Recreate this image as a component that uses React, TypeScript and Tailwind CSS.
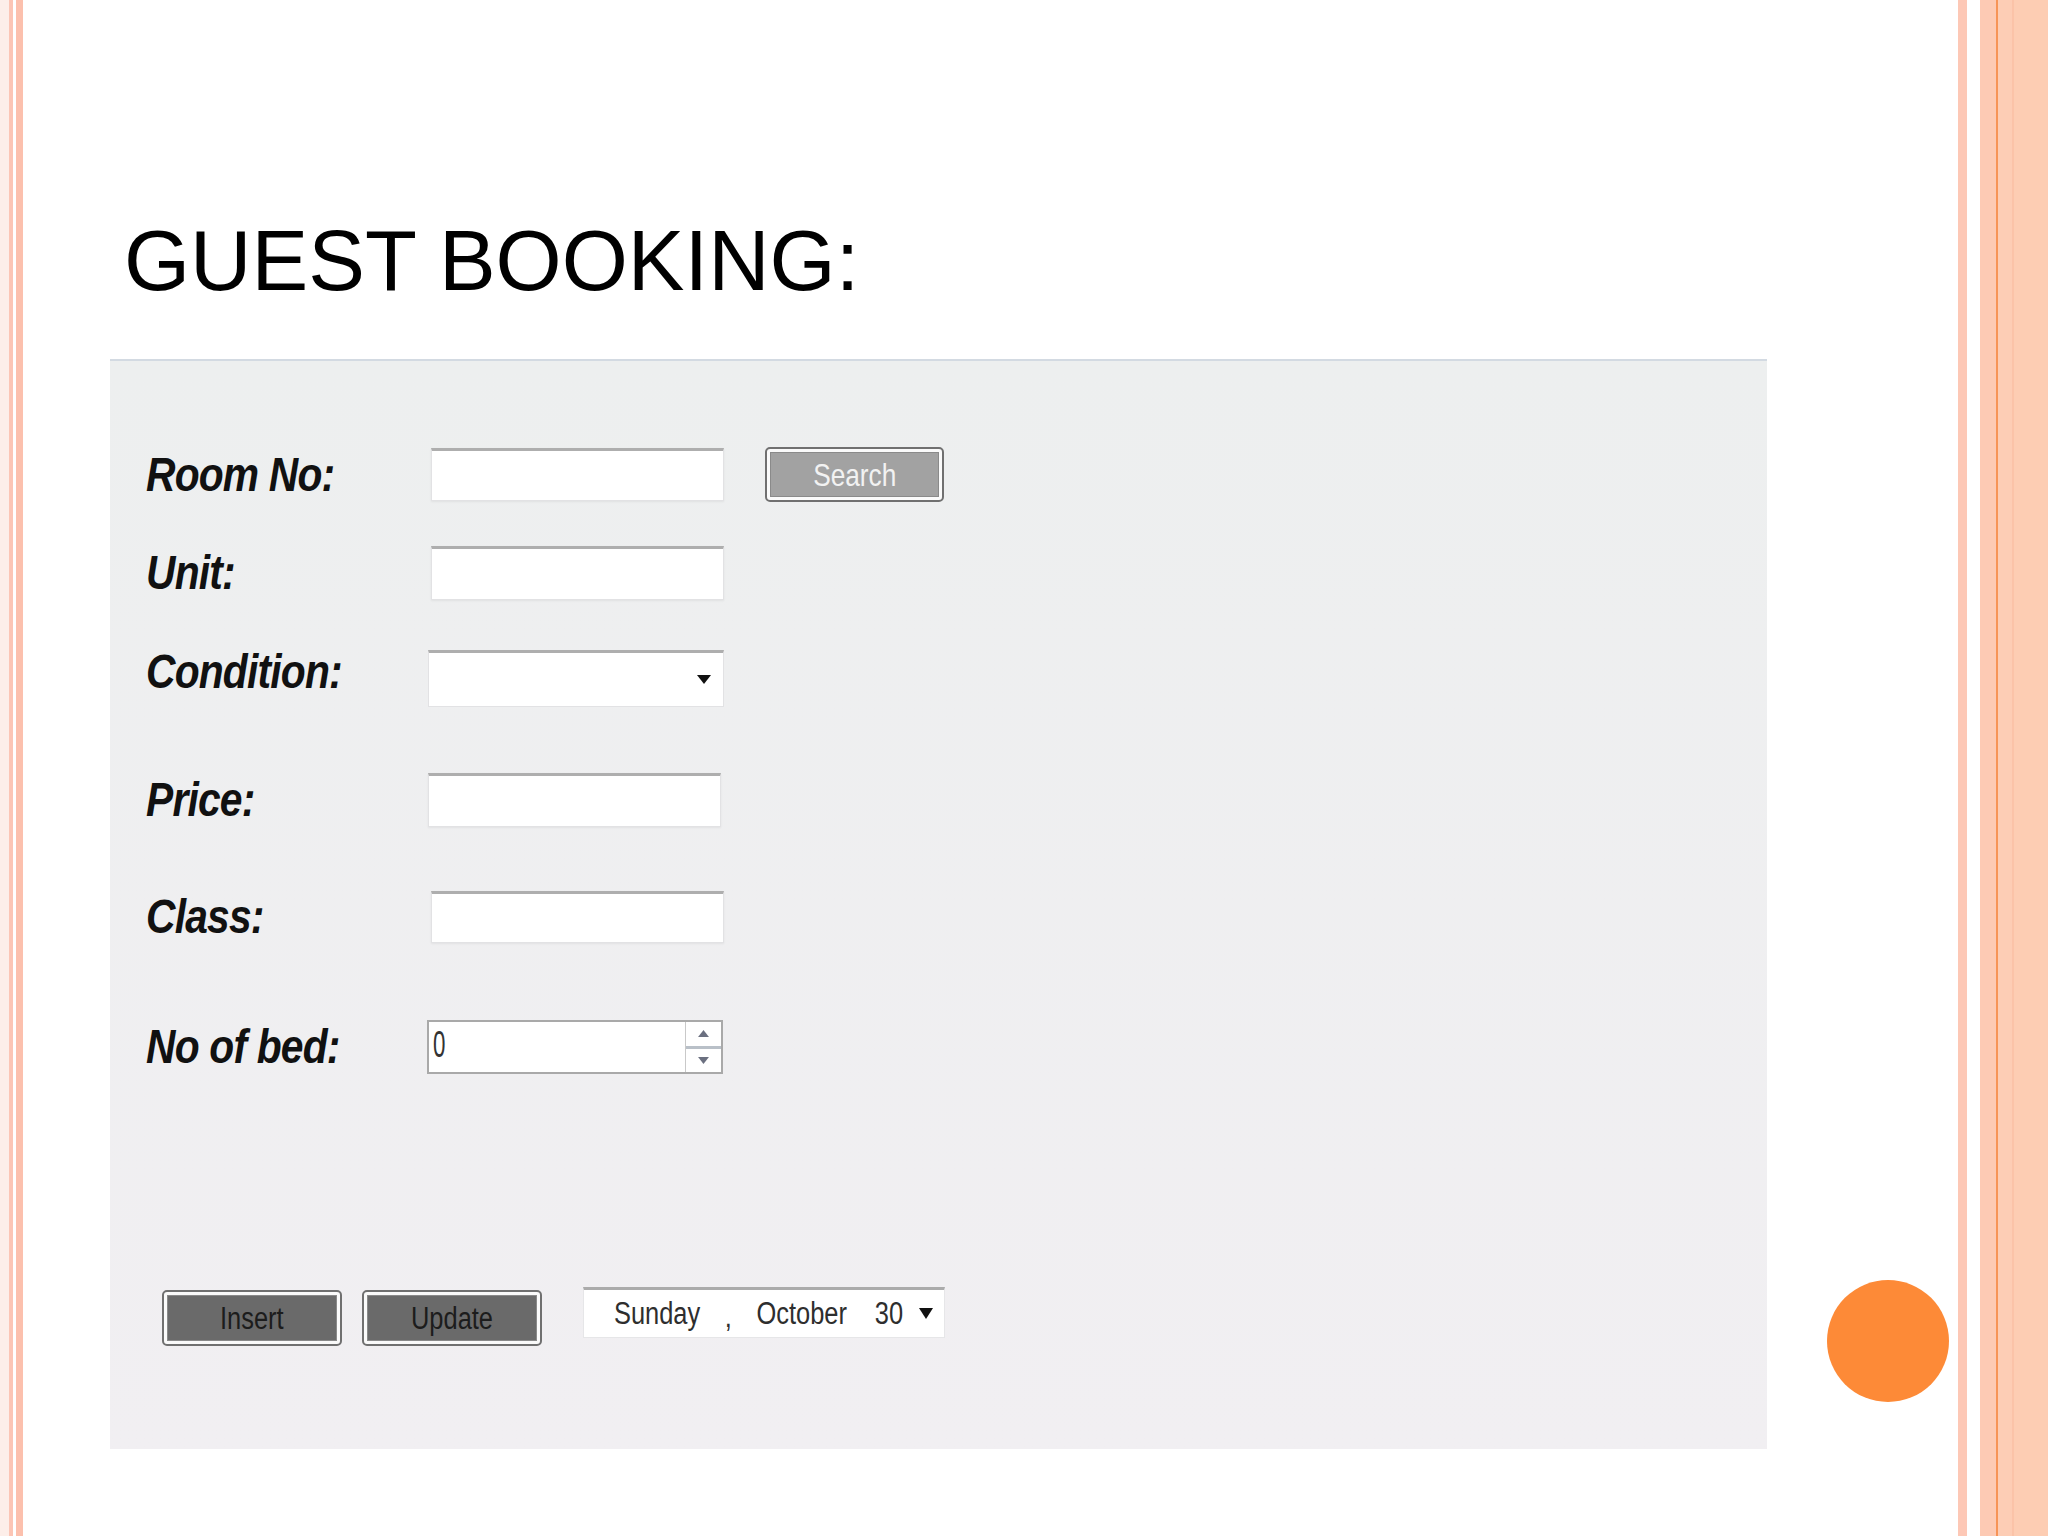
import React from "react";

// no narrow face is installed, so Liberation Sans is squeezed to Arial Narrow widths
const narrow = "font-['Liberation_Sans_Narrow','Arial_Narrow','Liberation_Sans',sans-serif]";

function Label({ text, className = "" }: { text: string; className?: string }) {
  return (
    <div
      className={`w-[285px] shrink-0 text-[48px] leading-none font-bold italic tracking-[-0.02em] text-[#111] ${narrow} ${className}`}
    >
      <span className="inline-block origin-left scale-x-[0.85] whitespace-nowrap">{text}</span>
    </div>
  );
}

function TextBox({ className = "" }: { className?: string }) {
  return (
    <div
      className={`w-[293px] bg-white border border-[#e2e2e4] border-t-[3px] border-t-[#aeaeae] shadow-[0_1px_2px_rgba(0,0,0,0.06)] ${className}`}
    />
  );
}

function Triangle({ className = "" }: { className?: string }) {
  return (
    <svg viewBox="0 0 14 9" className={`shrink-0 ${className}`}>
      <path d="M0 0 H14 L7 9 Z" fill="currentColor" />
    </svg>
  );
}

function WinButton({
  label,
  className = "",
  inner,
  text,
}: {
  label: string;
  className?: string;
  inner: string;
  text: string;
}) {
  return (
    <div
      className={`rounded-[5px] border-2 border-[#707070] bg-[#fafafa] p-[3px] ${className}`}
    >
      <div
        className={`flex h-full w-full items-center justify-center border border-[#8a8a8a] ${inner} ${text} ${narrow} leading-none`}
      >
        <span className="inline-block scale-x-[0.82] whitespace-nowrap">{label}</span>
      </div>
    </div>
  );
}

export default function App() {
  return (
    <div className="relative flex h-[1536px] w-[2048px] overflow-hidden bg-white font-['Liberation_Sans',Arial,sans-serif]">
      {/* left slide frame */}
      <div className="flex h-full shrink-0">
        <div className="w-[9px] bg-[#fdeee9]" />
        <div className="w-[4px] bg-[#fcc5b5]" />
        <div className="w-[3px] bg-white" />
        <div className="w-[7px] bg-[#fcc0ad]" />
      </div>

      {/* slide body */}
      <div className="flex flex-1 flex-col pl-[87px] pt-[218px]">
        <h1 className="ml-[14px] h-[85px] text-[85px] leading-none font-normal text-black">
          GUEST BOOKING:
        </h1>

        <div className="mt-[56px] flex h-[1090px] w-[1657px] flex-col border-t-2 border-[#d3dae2] bg-linear-to-b from-[#edefef] to-[#f1eff2] pl-[36px] pt-[86px]">
          {/* Room No */}
          <div className="flex h-[55px] items-center">
            <Label text="Room No:" />
            <TextBox className="h-[53px]" />
            <WinButton
              label="Search"
              className="ml-[41px] h-[55px] w-[179px]"
              inner="bg-[#a2a2a2]"
              text="text-[#f2f2f2] text-[32px]"
            />
          </div>

          {/* Unit */}
          <div className="mt-[44px] flex h-[54px] items-center">
            <Label text="Unit:" />
            <TextBox className="h-[54px]" />
          </div>

          {/* Condition */}
          <div className="mt-[50px] flex h-[57px] items-center">
            <Label text="Condition:" className="-mt-[14px]" />
            <div className="-ml-[3px] flex h-[57px] w-[296px] items-center justify-end border border-[#e2e2e4] border-t-[3px] border-t-[#aeaeae] bg-white pr-[12px]">
              <Triangle className="h-[9px] w-[14px] text-[#111]" />
            </div>
          </div>

          {/* Price */}
          <div className="mt-[66px] flex h-[54px] items-center">
            <Label text="Price:" />
            <TextBox className="-ml-[3px] h-[54px]" />
          </div>

          {/* Class */}
          <div className="mt-[64px] flex h-[52px] items-center">
            <Label text="Class:" />
            <TextBox className="h-[52px]" />
          </div>

          {/* No of bed */}
          <div className="mt-[77px] flex h-[54px] items-center">
            <Label text="No of bed:" />
            <div className="-ml-[4px] flex h-[54px] w-[296px] border-2 border-[#a9a9a9] bg-white">
              <div className={`flex-1 pl-[4px] pt-[5px] text-[36px] leading-none text-[#333] ${narrow}`}>
                <span className="inline-block origin-left scale-x-[0.62]">0</span>
              </div>
              <div className="flex w-[36px] flex-col border-l border-[#c9c9c9]">
                <div className="flex flex-1 items-center justify-center border-b-[3px] border-[#b9c0c8]">
                  <Triangle className="h-[7px] w-[11px] rotate-180 text-[#6b7080]" />
                </div>
                <div className="flex flex-1 items-center justify-center">
                  <Triangle className="h-[7px] w-[11px] text-[#6b7080]" />
                </div>
              </div>
            </div>
          </div>

          {/* action row */}
          <div className="mt-[213px] flex items-start pl-[16px]">
            <WinButton
              label="Insert"
              className="mt-[3px] h-[56px] w-[180px]"
              inner="bg-[#6a6a6a]"
              text="text-[#1c1c1c] text-[31px]"
            />
            <WinButton
              label="Update"
              className="ml-[20px] mt-[3px] h-[56px] w-[180px]"
              inner="bg-[#6a6a6a]"
              text="text-[#1c1c1c] text-[31px]"
            />
            <div className="ml-[41px] flex h-[51px] w-[362px] items-center border border-[#e6e6e8] border-t-[3px] border-t-[#ababab] bg-white pl-[30px]">
              <div
                className={`flex origin-left scale-x-[0.82] items-center whitespace-nowrap text-[31px] leading-none text-[#2e2e2e] ${narrow}`}
              >
                <span>Sunday</span>
                <span className="ml-[30px] mt-[6px]">,</span>
                <span className="ml-[30px]">October</span>
                <span className="ml-[34px]">30</span>
                <Triangle className="ml-[17px] h-[11px] w-[21px] text-[#111]" />
              </div>
            </div>
          </div>
        </div>
      </div>

      {/* right slide frame */}
      <div className="flex h-full shrink-0">
        <div className="w-[9px] bg-[#fdc8b6]" />
        <div className="w-[13px] bg-white" />
        <div className="w-[16px] bg-[#fdcab4]" />
        <div className="w-[2px] bg-[#f79457]" />
        <div className="w-[14px] bg-[#fdcdb5]" />
        <div className="w-[2px] bg-[#fbc3a8]" />
        <div className="w-[34px] bg-[#fdcdb3]" />
      </div>

      {/* slide ornament */}
      <div className="absolute left-[1827px] top-[1280px] h-[122px] w-[122px] rounded-full bg-[#fd8a37]" />
    </div>
  );
}
